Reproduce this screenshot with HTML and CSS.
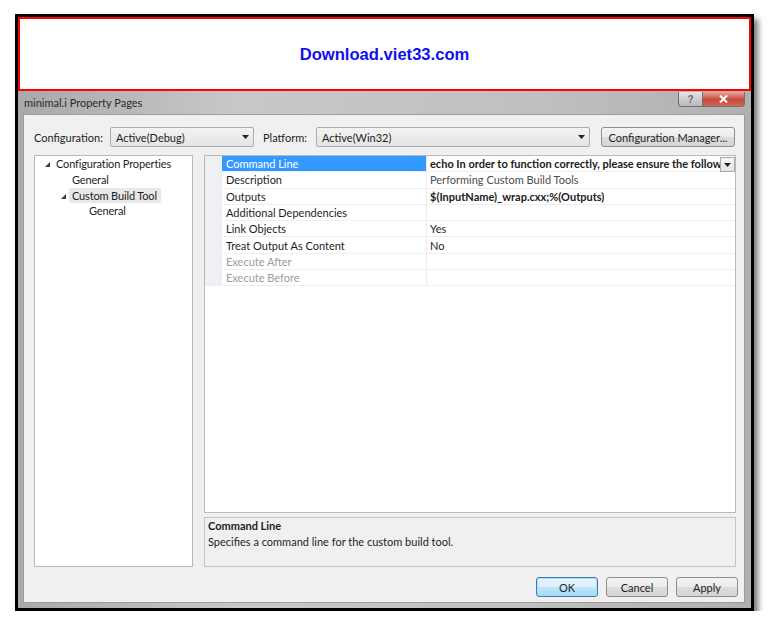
FILE: index.html
```html
<!DOCTYPE html>
<html lang="en">
<head>
    <meta charset="UTF-8">
    <meta name="viewport" content="width=device-width, initial-scale=1.0">
    <title>minimal.i Property Pages</title>
    <link rel="stylesheet" href="styles.css">
</head>
<body>
    <div class="shot">
        <div class="banner">Download.viet33.com</div>

        <div class="window">
            <div class="titlebar">
                <span class="title">minimal.i Property Pages</span>
                <div class="caption">
                    <span class="cap cap-help">?</span>
                    <span class="cap cap-close">
                        <svg width="9" height="8" viewBox="0 0 9 8"><path d="M1 0.5 L8 7.5 M8 0.5 L1 7.5" stroke="#fff" stroke-width="2"/></svg>
                    </span>
                </div>
            </div>

            <div class="client">
                <div class="toolbar">
                    <span class="lbl lbl-config">Configuration:</span>
                    <div class="combo combo-config">
                        <span>Active(Debug)</span>
                        <svg class="arrow" width="7" height="4" viewBox="0 0 7 4"><path d="M0 0 H7 L3.5 4 Z" fill="#222"/></svg>
                    </div>
                    <span class="lbl lbl-platform">Platform:</span>
                    <div class="combo combo-platform">
                        <span>Active(Win32)</span>
                        <svg class="arrow" width="7" height="4" viewBox="0 0 7 4"><path d="M0 0 H7 L3.5 4 Z" fill="#222"/></svg>
                    </div>
                    <button type="button" class="btn btn-manager">Configuration Manager...</button>
                </div>

                <div class="main">
                    <div class="tree">
                        <div class="node lvl0"><span class="tri"></span>Configuration Properties</div>
                        <div class="node lvl1">General</div>
                        <div class="node lvl1"><span class="tri"></span><span class="hot">Custom Build Tool</span></div>
                        <div class="node lvl2">General</div>
                    </div>

                    <div class="right">
                        <div class="grid">
                            <div class="row selected">
                                <span class="gutter"></span>
                                <span class="name">Command Line</span>
                                <span class="value bold">echo In order to function correctly, please ensure the following</span>
                                <span class="drop">
                                    <svg width="7" height="4" viewBox="0 0 7 4"><path d="M0 0 H7 L3.5 4 Z" fill="#222"/></svg>
                                </span>
                            </div>
                            <div class="row">
                                <span class="gutter"></span>
                                <span class="name">Description</span>
                                <span class="value soft">Performing Custom Build Tools</span>
                            </div>
                            <div class="row">
                                <span class="gutter"></span>
                                <span class="name">Outputs</span>
                                <span class="value bold">$(InputName)_wrap.cxx;%(Outputs)</span>
                            </div>
                            <div class="row">
                                <span class="gutter"></span>
                                <span class="name">Additional Dependencies</span>
                                <span class="value"></span>
                            </div>
                            <div class="row">
                                <span class="gutter"></span>
                                <span class="name">Link Objects</span>
                                <span class="value">Yes</span>
                            </div>
                            <div class="row">
                                <span class="gutter"></span>
                                <span class="name">Treat Output As Content</span>
                                <span class="value">No</span>
                            </div>
                            <div class="row disabled">
                                <span class="gutter"></span>
                                <span class="name">Execute After</span>
                                <span class="value"></span>
                            </div>
                            <div class="row disabled">
                                <span class="gutter"></span>
                                <span class="name">Execute Before</span>
                                <span class="value"></span>
                            </div>
                        </div>

                        <div class="desc">
                            <div class="desc-title">Command Line</div>
                            <div class="desc-text">Specifies a command line for the custom build tool.</div>
                        </div>
                    </div>
                </div>

                <div class="footer">
                    <button type="button" class="btn btn-ok">OK</button>
                    <button type="button" class="btn">Cancel</button>
                    <button type="button" class="btn">Apply</button>
                </div>
            </div>
        </div>
    </div>
</body>
</html>
```

FILE: styles.css
```css
*{
    margin: 0;
    padding: 0;
    box-sizing: border-box;
}
body{
    background-color: #fff;
    font-family: "Lato", "Open Sans", sans-serif;
    font-size: 11px;
    color: #1e1e1e;
}
.shot{
    margin: 14px 0 0 15px;
    width: 739px;
    height: 597px;
    border: 3px solid #000;
    box-shadow: 4px 5px 6px rgba(0, 0, 0, 0.55);
    display: flex;
    flex-direction: column;
}
.banner{
    height: 74px;
    border: 2px solid #f00;
    background-color: #fff;
    display: flex;
    align-items: center;
    justify-content: center;
    padding-top: 1px;
    font-family: "Liberation Sans", Arial, sans-serif;
    font-weight: bold;
    font-size: 16.6px;
    color: #1010f0;
}

/* window frame */
.window{
    flex: 1;
    display: flex;
    flex-direction: column;
    background: linear-gradient(90deg, #a9a9a9, #c8c8c8 30%, #c0c0c0 70%, #b0b0b0);
    padding: 0 6px 5px 5px;
}
.titlebar{
    height: 23px;
    display: flex;
    align-items: flex-start;
    justify-content: space-between;
    margin: 0 -5px 0 1px;
}
.title{
    padding-top: 5px;
    font-size: 11px;
    color: #2a2a2a;
}
.caption{
    display: flex;
    padding-top: 1px;
    margin-right: 5px;
}
.cap{
    height: 15px;
    display: flex;
    align-items: center;
    justify-content: center;
    border: 1px solid #707070;
    border-top: none;
}
.cap-help{
    width: 25px;
    border-radius: 0 0 0 4px;
    background: linear-gradient(#e4e4e4, #b9b9b9);
    color: #6b6b6b;
    font-size: 10px;
    font-family: "Liberation Sans", Arial, sans-serif;
    font-weight: bold;
}
.cap-close{
    width: 42px;
    border-left: none;
    border-radius: 0 0 4px 0;
    background: linear-gradient(#e7a79d, #c9483a 55%, #d06a5c);
}

.client{
    flex: 1;
    background-color: #f0f0f0;
    border: 1px solid #9c9c9c;
    padding: 12px 8px 5px 10px;
    display: flex;
    flex-direction: column;
}

/* configuration row */
.toolbar{
    height: 20px;
    display: flex;
    align-items: center;
}
.lbl{
    flex-shrink: 0;
}
.lbl-config{
    width: 76px;
}
.lbl-platform{
    width: 53px;
    margin-left: 9px;
}
.combo{
    flex-shrink: 0;
    height: 20px;
    display: flex;
    align-items: center;
    justify-content: space-between;
    padding: 0 4px 0 5px;
    border: 1px solid #acacac;
    border-radius: 2px;
    background: linear-gradient(#f3f3f3, #e4e4e4);
}
.combo-config{
    width: 144px;
}
.combo-platform{
    width: 274px;
}
.btn{
    font-family: inherit;
    font-size: 11px;
    color: #1e1e1e;
    height: 20px;
    border: 1px solid #8e8e8e;
    border-radius: 3px;
    background: linear-gradient(#f4f4f4, #ebebeb 50%, #dcdcdc 51%, #d5d5d5);
}
.btn-manager{
    width: 134px;
    margin-left: 11px;
}

/* tree + grid */
.main{
    margin-top: 8px;
    height: 412px;
    display: flex;
    gap: 11px;
}
.tree{
    width: 159px;
    flex-shrink: 0;
    border: 1px solid #b9b9b9;
    background-color: #fff;
    white-space: nowrap;
    letter-spacing: -0.15px;
}
.node{
    height: 15.7px;
    display: flex;
    align-items: center;
}
.lvl0{
    padding-left: 10px;
}
.lvl1{
    padding-left: 37px;
}
.lvl1 .tri{
    margin-left: -11px;
}
.lvl2{
    padding-left: 54px;
}
.tri{
    width: 0;
    height: 0;
    border-left: 5px solid transparent;
    border-bottom: 5px solid #3c3c3c;
    margin-right: 6px;
    margin-top: 2px;
}
.hot{
    background-color: #e8e8e8;
    padding: 0 4px 0 3px;
    margin-left: -3px;
    border-radius: 2px;
    line-height: 15px;
}

.right{
    flex: 1;
    min-width: 0;
    display: flex;
    flex-direction: column;
    gap: 4px;
}
.grid{
    flex: 1;
    border: 1px solid #b9b9b9;
    background-color: #fff;
}
.row{
    height: 16.3px;
    display: flex;
    align-items: stretch;
    position: relative;
}
.row span{
    display: flex;
    align-items: center;
}
.gutter{
    width: 17px;
    flex-shrink: 0;
    background-color: #eef0f4;
}
.name{
    width: 204px;
    flex-shrink: 0;
    padding-left: 4px;
    border-bottom: 1px solid #efefef;
}
.value{
    flex: 1;
    min-width: 0;
    padding-left: 3px;
    border-left: 1px solid #ececec;
    border-bottom: 1px solid #efefef;
    white-space: nowrap;
    overflow: hidden;
}
.bold{
    font-weight: bold;
    color: #1b1b1b;
}
.soft{
    color: #4d4d4d;
}
.selected .name{
    background-color: #3399ff;
    color: #fff;
}
.selected .value{
    padding-right: 16px;
}
.disabled .name{
    color: #9c9c9c;
}
.drop{
    position: absolute;
    right: 0;
    top: 1px;
    width: 15px;
    height: 15px;
    justify-content: center;
    border: 1px solid #a9a9a9;
    background: linear-gradient(#f7f7f7, #e3e3e3);
}

.desc{
    height: 50px;
    border: 1px solid #c3c3c3;
    background-color: #f0f0f0;
    padding: 0 3px;
}
.desc-title{
    font-weight: bold;
    line-height: 16px;
}
.desc-text{
    line-height: 16px;
}

/* bottom buttons */
.footer{
    margin-top: 10px;
    height: 20px;
    display: flex;
    justify-content: flex-end;
    gap: 8px;
    margin-right: -2px;
}
.footer .btn{
    width: 62px;
}
.btn-ok{
    border-color: #3c7fb1;
    box-shadow: inset 0 0 0 1px #a8dcf3;
    background: linear-gradient(#eaf6fd, #d9f0fc 50%, #bee6fd 51%, #a7d9f5);
}
```
